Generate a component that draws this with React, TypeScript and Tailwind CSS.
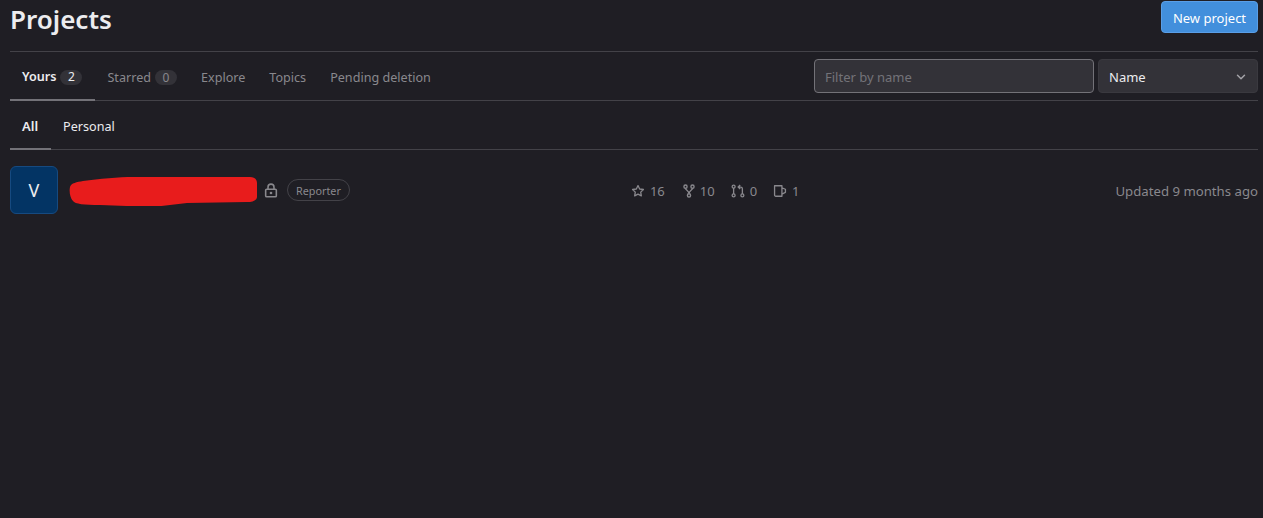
import { ChevronDown } from "lucide-react";

const tabs = ["Explore", "Topics", "Pending deletion"];

function Star() {
  return (
    <svg width="14" height="14" viewBox="0 0 16 16" fill="none" stroke="currentColor" strokeWidth="1.5" strokeLinejoin="round">
      <path d="M8 1.8l1.9 3.9 4.3.6-3.1 3 .7 4.3L8 11.6l-3.8 2 .7-4.3-3.1-3 4.3-.6L8 1.8z" />
    </svg>
  );
}

function Fork() {
  return (
    <svg width="14" height="14" viewBox="0 0 16 16" fill="none" stroke="currentColor" strokeWidth="1.6">
      <circle cx="4" cy="3" r="1.8" />
      <circle cx="12" cy="3" r="1.8" />
      <circle cx="8" cy="13" r="1.8" />
      <path d="M4 4.8c0 2.6 4 2.2 4 6.4M12 4.8c0 2.6-4 2.2-4 6.4" />
    </svg>
  );
}

function MergeRequest() {
  return (
    <svg width="14" height="14" viewBox="0 0 16 16" fill="none" stroke="currentColor" strokeWidth="1.5">
      <circle cx="3" cy="3" r="1.7" />
      <circle cx="3" cy="13" r="1.7" />
      <circle cx="13" cy="13" r="1.7" />
      <path d="M3 4.7v6.6M13 11.3V5.5c0-1.2-.8-2-2-2H8.5M10.5 1.2L8.2 3.5l2.3 2.3" />
    </svg>
  );
}

function Issue() {
  return (
    <svg width="14" height="14" viewBox="0 0 16 16" fill="none" stroke="currentColor" strokeWidth="1.5" strokeLinejoin="round">
      <path d="M1.8 2h8.4v12H3.2c-.8 0-1.4-.6-1.4-1.4V2zM10.2 4.5l4 1.5v3.5l-4 2" />
    </svg>
  );
}

function Lock() {
  return (
    <svg width="14" height="15" viewBox="0 0 16 17" fill="none" stroke="currentColor" strokeWidth="1.8">
      <rect x="1.9" y="7" width="12.2" height="8.6" rx="1.2" />
      <path d="M4.6 7V4.6a3.4 3.4 0 0 1 6.8 0V7" />
      <circle cx="8" cy="11.3" r="1.5" fill="currentColor" stroke="none" />
    </svg>
  );
}

function Scribble() {
  return (
    <svg width="190" height="32" viewBox="0 -2 190 32" className="shrink-0">
      <path
        d="M1 11C2 7 8 6 14 5C30 3 50 1 64 1L181 1C186 1 188 4 188 7L188 21C188 24 184 26 178 26L118 27L84 31L31 29C15 29 6 28 4 25C1 22 0 15 1 11Z"
        fill="#e81c1c"
      />
    </svg>
  );
}

export default function App() {
  return (
    <div className="min-h-screen bg-[#1f1e24] pr-[5px] pl-[10px] font-['Noto_Sans',sans-serif] text-sm text-[#ececef]">
      <div className="flex h-[52px] justify-between border-b border-[#434248] pt-px">
        <h1 className="text-[26px] leading-[37px] font-semibold text-[#ececef]">Projects</h1>
        <button className="h-[32px] w-[97px] rounded border border-[#5a9ee6] bg-[#428fdc] pt-[2px] text-[13px] text-white">
          New project
        </button>
      </div>

      <div className="flex h-[49px] items-center justify-between border-b border-[#434248]">
        <div className="flex h-full items-stretch text-[12.6px] text-[#89888d]">
          <div className="-mb-px flex items-center gap-[4px] border-b-2 border-[#737278] pt-[3px] pr-[13px] pl-[12px] font-semibold text-[#ececef]">
            Yours
            <span className="flex h-[15px] min-w-[22px] items-center justify-center rounded-full bg-[#333238] text-[12px] font-normal">2</span>
          </div>
          <div className="flex items-center gap-[4px] px-[12px] pt-[3px]">
            Starred
            <span className="flex h-[15px] min-w-[22px] items-center justify-center rounded-full bg-[#333238] text-[12px]">0</span>
          </div>
          {tabs.map((tab) => (
            <div key={tab} className="flex items-center px-[12px] pt-[3px]">
              {tab}
            </div>
          ))}
        </div>
        <div className="flex items-center gap-[4px]">
          <div className="flex h-[34px] w-[280px] items-center rounded border border-[#737278] bg-[#333238] px-[10px] pt-[2px] text-[13px] text-[#737278]">
            Filter by name
          </div>
          <div className="flex h-[34px] w-[160px] items-center justify-between rounded border border-[#3a393f] bg-[#333238] pt-[2px] pr-[9px] pl-[10px] text-[13px] text-[#ececef]">
            Name
            <ChevronDown size={14} strokeWidth={2.5} className="text-[#a4a3a8]" />
          </div>
        </div>
      </div>

      <div className="flex h-[49px] items-stretch border-b border-[#434248]">
        <div className="-mb-px flex items-center border-b-2 border-[#737278] pt-[3px] pr-[13px] pl-[12px] text-[13px] font-semibold">All</div>
        <div className="flex items-center px-[12px] pt-[3px] text-[12.6px]">Personal</div>
      </div>

      <div className="flex items-center pt-[16px]">
        <div className="flex h-[48px] w-[48px] shrink-0 items-center justify-center rounded-[6px] border border-[#164a80] bg-[#033464] pt-[2px] text-[18px] text-[#ececef]">
          V
        </div>
        <div className="ml-[11px]">
          <Scribble />
        </div>
        <span className="ml-[5px] text-[#89888d]">
          <Lock />
        </span>
        <span className="ml-[9px] flex h-[22px] items-center rounded-full border border-[#434248] px-[8px] pt-[2px] text-[10.8px] text-[#89888d]">
          Reporter
        </span>
        <div className="ml-[281px] flex items-center pt-[2px] text-[13px] text-[#89888d]">
          <span className="flex items-center gap-[5px]"><Star />16</span>
          <span className="ml-[17px] flex items-center gap-[4px]"><Fork />10</span>
          <span className="ml-[16px] flex items-center gap-[5px]"><MergeRequest />0</span>
          <span className="ml-[16px] flex items-center gap-[5px]"><Issue />1</span>
        </div>
        <span className="ml-auto pt-[2px] text-[13.2px] text-[#89888d]">Updated 9 months ago</span>
      </div>
    </div>
  );
}
